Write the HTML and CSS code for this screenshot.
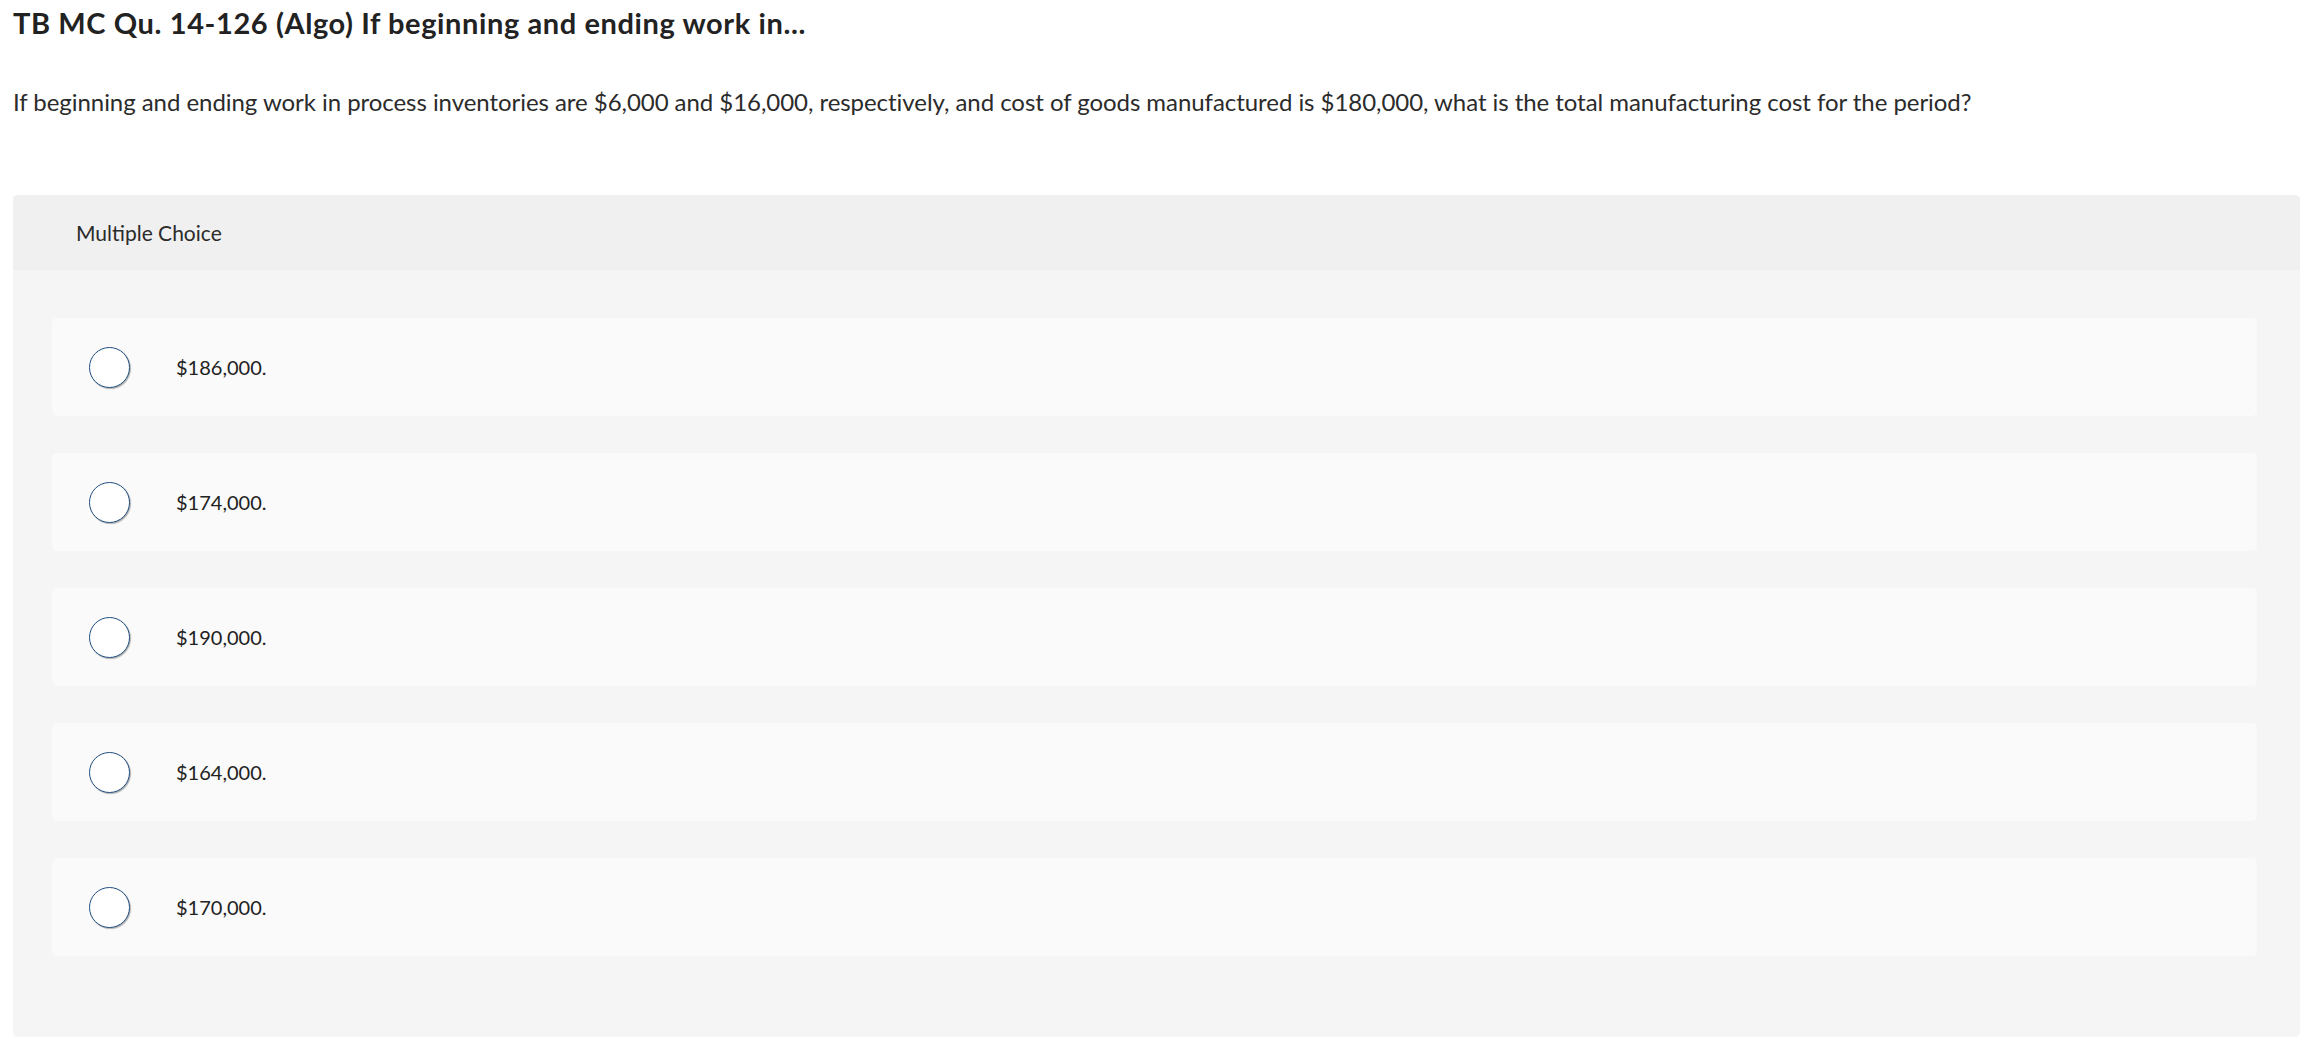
FILE: index.html
```html
<!DOCTYPE html>
<html lang="en">
<head>
<meta charset="utf-8">
<title>TB MC Qu. 14-126</title>
<link rel="stylesheet" href="styles.css">
</head>
<body>
<div class="page">
  <h1 class="title">TB MC Qu. 14-126 (Algo) If beginning and ending work in...</h1>
  <p class="question">If beginning and ending work in process inventories are $6,000 and $16,000, respectively, and cost of goods manufactured is $180,000, what is the total manufacturing cost for the period?</p>
  <section class="panel">
    <div class="panel-head">Multiple Choice</div>
    <div class="panel-body">
      <label class="option"><span class="radio"></span><span class="opt-text">$186,000.</span></label>
      <label class="option"><span class="radio"></span><span class="opt-text">$174,000.</span></label>
      <label class="option"><span class="radio"></span><span class="opt-text">$190,000.</span></label>
      <label class="option"><span class="radio"></span><span class="opt-text">$164,000.</span></label>
      <label class="option"><span class="radio"></span><span class="opt-text">$170,000.</span></label>
    </div>
  </section>
</div>
</body>
</html>
```
FILE: styles.css
```css
html, body {
  margin: 0;
  padding: 0;
  background: #ffffff;
}
body {
  font-family: Lato, "Open Sans", "Liberation Sans", sans-serif;
  color: #2b2b2b;
}
.page {
  padding: 0 12px 0 13px;
}
.title {
  margin: 0;
  padding-top: 6px;
  font-size: 29px;
  line-height: 34px;
  font-weight: 700;
  letter-spacing: 0.6px;
  color: #222222;
}
.question {
  margin: 0;
  padding-top: 47px;
  font-size: 24px;
  line-height: 30px;
  letter-spacing: -0.05px;
  color: #2b2b2b;
}
.panel {
  margin-top: 78px;
  border-radius: 5px;
  overflow: hidden;
  background: #f5f5f5;
}
.panel-head {
  height: 75px;
  background: #f0f0f0;
  display: flex;
  align-items: center;
  padding-left: 63px;
  font-size: 21px;
  color: #2b2b2b;
}
.panel-body {
  padding: 48px 43px 81px 39px;
  display: flex;
  flex-direction: column;
  gap: 37px;
}
.option {
  height: 98px;
  background: #fafafa;
  border-radius: 5px;
  display: flex;
  align-items: center;
  padding-left: 37px;
}
.radio {
  width: 39px;
  height: 39px;
  border: 1.5px solid #1f4f80;
  border-radius: 50%;
  background: #ffffff;
  box-shadow: 1px 1px 1px rgba(0,0,0,0.3);
  flex: none;
}
.opt-text {
  margin-left: 46px;
  font-size: 20px;
  color: #222222;
}
```
